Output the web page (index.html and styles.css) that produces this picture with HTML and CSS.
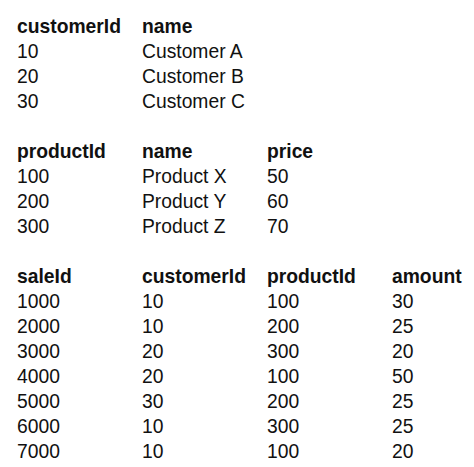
FILE: index.html
```html
<!DOCTYPE html>
<html>
<head>
<meta charset="utf-8">
<link rel="stylesheet" href="styles.css">
</head>
<body>
<div class="page">
  <div class="tbl">
    <div class="row head"><span>customerId</span><span>name</span></div>
    <div class="row"><span>10</span><span>Customer A</span></div>
    <div class="row"><span>20</span><span>Customer B</span></div>
    <div class="row"><span>30</span><span>Customer C</span></div>
  </div>
  <div class="tbl">
    <div class="row head"><span>productId</span><span>name</span><span>price</span></div>
    <div class="row"><span>100</span><span>Product X</span><span>50</span></div>
    <div class="row"><span>200</span><span>Product Y</span><span>60</span></div>
    <div class="row"><span>300</span><span>Product Z</span><span>70</span></div>
  </div>
  <div class="tbl">
    <div class="row head"><span>saleId</span><span>customerId</span><span>productId</span><span>amount</span></div>
    <div class="row"><span>1000</span><span>10</span><span>100</span><span>30</span></div>
    <div class="row"><span>2000</span><span>10</span><span>200</span><span>25</span></div>
    <div class="row"><span>3000</span><span>20</span><span>300</span><span>20</span></div>
    <div class="row"><span>4000</span><span>20</span><span>100</span><span>50</span></div>
    <div class="row"><span>5000</span><span>30</span><span>200</span><span>25</span></div>
    <div class="row"><span>6000</span><span>10</span><span>300</span><span>25</span></div>
    <div class="row"><span>7000</span><span>10</span><span>100</span><span>20</span></div>
  </div>
</div>
</body>
</html>
```

FILE: styles.css
```css
html, body {
  margin: 0;
  padding: 0;
  background: #ffffff;
}
body {
  font-family: "Liberation Sans", Arial, sans-serif;
  font-size: 19.3px;
  color: #111111;
}
.page {
  padding: 14px 0 0 17px;
  display: flex;
  flex-direction: column;
  gap: 25px;
}
.row {
  display: grid;
  grid-template-columns: 125px 125px 125px 80px;
  height: 25px;
  line-height: 25px;
  white-space: nowrap;
}
.head {
  font-weight: bold;
}
```
